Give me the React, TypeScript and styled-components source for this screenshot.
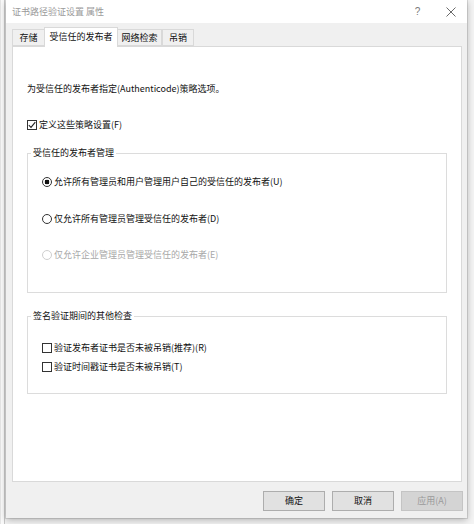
import styled, { createGlobalStyle } from 'styled-components';

const GlobalStyle = createGlobalStyle`
  html, body {
    margin: 0;
    padding: 0;
    background: #f4f4f4;
  }
  * {
    box-sizing: border-box;
  }
`;

const font = `"Noto Sans CJK SC", "Microsoft YaHei", sans-serif`;

const App = () => {
  return (
    <>
      <GlobalStyle />
      <Desktop>
        <Dialog>
          <TitleBar>
            <Title>证书路径验证设置 属性</Title>
            <TitleButton>?</TitleButton>
            <TitleButton>
              <svg width="10" height="10" viewBox="0 0 10 10">
                <path d="M0.5 0.5 L9.5 9.5 M9.5 0.5 L0.5 9.5" stroke="#6a6a6a" strokeWidth="1" fill="none" />
              </svg>
            </TitleButton>
          </TitleBar>

          <TabBar>
            <Tab $width={33}>存储</Tab>
            <Tab $width={74} $active>
              受信任的发布者
            </Tab>
            <Tab $width={45}>网络检索</Tab>
            <Tab $width={32}>吊销</Tab>
          </TabBar>

          <Panel>
            <Text>为受信任的发布者指定(Authenticode)策略选项。</Text>
            <CheckRow $top={24}>
              <CheckBox $checked>
                <svg width="8" height="8" viewBox="0 0 8 8">
                  <path d="M0.8 4.2 L3 6.4 L7.3 1.2" stroke="#222" strokeWidth="1.1" fill="none" />
                </svg>
              </CheckBox>
              <Text>定义这些策略设置(F)</Text>
            </CheckRow>

            <Group $top={16} $padTop={17} $padBottom={31} $gap={24.5}>
              <Legend>受信任的发布者管理</Legend>
              <OptionRow>
                <Radio $checked />
                <Text>允许所有管理员和用户管理用户自己的受信任的发布者(U)</Text>
              </OptionRow>
              <OptionRow>
                <Radio />
                <Text>仅允许所有管理员管理受信任的发布者(D)</Text>
              </OptionRow>
              <OptionRow>
                <Radio $disabled />
                <Text $disabled>仅允许企业管理员管理受信任的发布者(E)</Text>
              </OptionRow>
            </Group>

            <Group $top={17} $padTop={20} $padBottom={20} $gap={7}>
              <Legend>签名验证期间的其他检查</Legend>
              <OptionRow>
                <CheckBox />
                <Text>验证发布者证书是否未被吊销(推荐)(R)</Text>
              </OptionRow>
              <OptionRow>
                <CheckBox />
                <Text>验证时间戳证书是否未被吊销(T)</Text>
              </OptionRow>
            </Group>
          </Panel>

          <ButtonRow>
            <Button>确定</Button>
            <Button>取消</Button>
            <Button disabled>应用(A)</Button>
          </ButtonRow>
        </Dialog>
      </Desktop>
    </>
  );
};

export default App;

const Desktop = styled.div`
  width: 474px;
  height: 524px;
  overflow: hidden;
  padding-left: 6px;
  display: flex;
  align-items: flex-start;
  background:
    linear-gradient(to right, #e6e6e6 0 1px, #fbfbfb 1px 4px, #c9c9c9 4px 5px, transparent 5px),
    #f4f4f4;
  font-family: ${font};
`;

const Dialog = styled.div`
  width: 461px;
  height: 518px;
  flex: none;
  display: flex;
  flex-direction: column;
  background: #f0f0f0;
  box-shadow: 0 0 0 1px rgba(0, 0, 0, 0.1), 0 2px 7px rgba(0, 0, 0, 0.28);
`;

const TitleBar = styled.div`
  height: 23px;
  flex: none;
  display: flex;
  align-items: center;
  padding-left: 6px;
  background: #fff;
`;

const Title = styled.div`
  flex: 1;
  font-size: 9px;
  line-height: 12px;
  color: #9a9a9a;
`;

const TitleButton = styled.div`
  width: 33px;
  height: 23px;
  display: flex;
  align-items: center;
  justify-content: center;
  font-family: "Liberation Sans", sans-serif;
  font-size: 10px;
  color: #7a7a7a;
`;

const TabBar = styled.div`
  height: 19px;
  margin-top: 4px;
  flex: none;
  display: flex;
  align-items: flex-end;
  padding-left: 6px;
`;

const Tab = styled.div<{ $width: number; $active?: boolean }>`
  width: ${(p) => p.$width}px;
  height: ${(p) => (p.$active ? 20 : 17)}px;
  margin: ${(p) => (p.$active ? '0 -1px -1px -1px' : '0')};
  position: relative;
  z-index: ${(p) => (p.$active ? 1 : 0)};
  display: flex;
  align-items: center;
  justify-content: center;
  border: 1px solid #d9d9d9;
  border-bottom: ${(p) => (p.$active ? 'none' : '1px solid #d9d9d9')};
  background: ${(p) => (p.$active ? '#fff' : '#f0f0f0')};
  font-size: 9px;
  line-height: 12px;
  color: #111;
  padding-bottom: ${(p) => (p.$active ? 2 : 0)}px;
`;

const Panel = styled.div`
  height: 436px;
  flex: none;
  margin: 0 5px 0 6px;
  padding: 36px 14px 0 14px;
  border: 1px solid #d9d9d9;
  background: #fff;
  display: flex;
  flex-direction: column;
`;

const Text = styled.div<{ $disabled?: boolean }>`
  font-size: 9px;
  line-height: 12px;
  height: 12px;
  white-space: nowrap;
  color: ${(p) => (p.$disabled ? '#a8a8a8' : '#111')};
`;

const CheckRow = styled.div<{ $top: number }>`
  display: flex;
  align-items: center;
  gap: 2px;
  height: 12px;
  margin-top: ${(p) => p.$top}px;
`;

const OptionRow = styled.div`
  display: flex;
  align-items: center;
  gap: 2px;
  height: 12px;
  padding-left: 14px;
`;

const CheckBox = styled.span<{ $checked?: boolean }>`
  width: 10px;
  height: 10px;
  flex: none;
  display: flex;
  align-items: center;
  justify-content: center;
  border: 1px solid #333;
  background: #fff;
`;

const Radio = styled.span<{ $checked?: boolean; $disabled?: boolean }>`
  width: 10px;
  height: 10px;
  flex: none;
  border-radius: 50%;
  border: 1px solid ${(p) => (p.$disabled ? '#cfcfcf' : '#333')};
  background: ${(p) =>
    p.$checked ? 'radial-gradient(circle, #111 0 2.2px, #fff 2.6px)' : '#fff'};
`;

const Group = styled.fieldset<{ $top: number; $padTop: number; $padBottom: number; $gap: number }>`
  margin: ${(p) => p.$top}px 0 0 0;
  padding: ${(p) => p.$padTop}px 0 ${(p) => p.$padBottom}px 0;
  border: 1px solid #dcdcdc;
  min-width: 0;
  display: flex;
  flex-direction: column;
  gap: ${(p) => p.$gap}px;
`;

const Legend = styled.legend`
  margin-left: 3px;
  padding: 0 2px;
  font-size: 9px;
  line-height: 12px;
  color: #111;
`;

const ButtonRow = styled.div`
  display: flex;
  justify-content: flex-end;
  gap: 7px;
  margin-top: 9px;
  padding-right: 4px;
`;

const Button = styled.button`
  width: 62px;
  height: 20px;
  padding: 0;
  border: 1px solid #adadad;
  background: #e1e1e1;
  font-family: ${font};
  font-size: 9px;
  line-height: 12px;
  color: #111;

  &:disabled {
    border-color: #c4c4c4;
    background: #d4d4d4;
    color: #9a9a9a;
  }
`;
